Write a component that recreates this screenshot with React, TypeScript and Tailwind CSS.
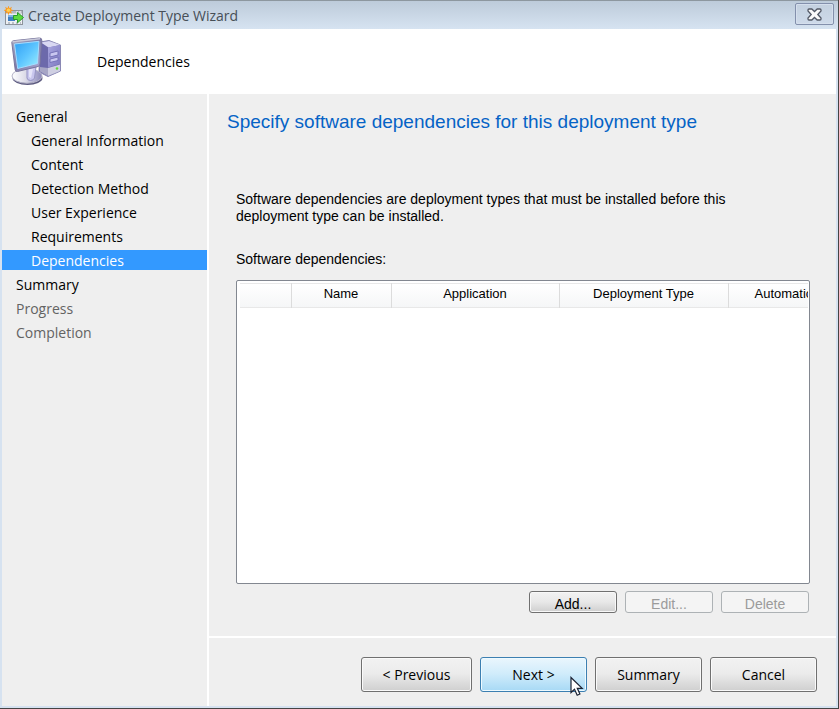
import React from "react";

const steps = [
  { name: "General", style: "pl-3.5 text-black" },
  { name: "General Information", style: "pl-[29px] text-black" },
  { name: "Content", style: "pl-[29px] text-black" },
  { name: "Detection Method", style: "pl-[29px] text-black" },
  { name: "User Experience", style: "pl-[29px] text-black" },
  { name: "Requirements", style: "pl-[29px] text-black" },
  { name: "Dependencies", style: "pl-[29px] bg-[#3399ff] text-white" },
  { name: "Summary", style: "pl-3.5 text-black" },
  { name: "Progress", style: "pl-3.5 text-[#636363]" },
  { name: "Completion", style: "pl-3.5 text-[#636363]" },
];

const bigButton =
  "h-[35px] rounded-[3px] border border-[#707070] bg-linear-to-b from-[#f2f2f2] from-0% via-[#ebebeb] via-48% to-[#cfcfcf] shadow-[inset_0_0_0_1px_#fafafa]";
const smallButton =
  "flex h-[22px] w-[88px] items-center justify-center rounded-[3px] border pt-1 font-['Liberation_Sans',Arial,sans-serif] text-sm leading-4";

const WizardIcon = () => (
  <svg width="20" height="20" viewBox="0 0 20 20" aria-hidden="true">
    <rect x="1.500" y="4.500" width="17" height="14" fill="#eceff3" stroke="#8d939b" />
    <path d="M2 5h16v2.500H2z" fill="#b4b9c0" />
    <path d="M12 6h2M15 6h2" stroke="#fff" />
    <path d="M4 9h7v6H4z" fill="#3f7fc4" />
    <path d="M4 9h7v2H4z" fill="#7fb2e4" />
    <path d="M4 17h2M8 17h2M12 17h2M16 17h1" stroke="#8d939b" />
    <path
      d="M9.500 9.500h4V6.500l6 5-6 5.300v-3.300h-4z"
      fill="#5edb40"
      stroke="#2a9a2c"
      strokeLinejoin="round"
    />
    <path
      d="M4.500-.5l.9 2.700L8 .8 6.900 3.300 9.700 4.200 6.900 5.200 8 7.700 5.400 6.500 4.500 9.300 3.500 6.500 1 7.700 2.100 5.200-.7 4.200 2.100 3.300 1 .8 3.500 2.200z"
      fill="#fb9a20"
    />
    <circle cx="4.500" cy="4.200" r="1.800" fill="#ffcf52" />
  </svg>
);

const ComputerIcon = () => (
  <svg width="52" height="51" viewBox="0 0 52 51" aria-hidden="true">
    <defs>
      <linearGradient id="screen" x1="0" y1="0" x2="1" y2="1">
        <stop offset="0" stopColor="#2f9ff3" />
        <stop offset="0.5" stopColor="#5cc4ff" />
        <stop offset="1" stopColor="#9df0ff" />
      </linearGradient>
      <linearGradient id="tower" x1="0" y1="0" x2="1" y2="1">
        <stop offset="0" stopColor="#a9a6e0" />
        <stop offset="1" stopColor="#7d79c0" />
      </linearGradient>
      <linearGradient id="base" x1="0" y1="0" x2="1" y2="0">
        <stop offset="0" stopColor="#ffffff" />
        <stop offset="0.45" stopColor="#dcdbe8" />
        <stop offset="1" stopColor="#8a87ba" />
      </linearGradient>
      <linearGradient id="frame" x1="0" y1="0" x2="1" y2="1">
        <stop offset="0" stopColor="#aeb0c6" />
        <stop offset="0.5" stopColor="#7d7aa8" />
        <stop offset="1" stopColor="#b3b1dc" />
      </linearGradient>
    </defs>
    {/* Tower */}
    <path d="M29 6l9-1.500 11.500 4.500v26L37 40.500 28 36z" fill="#6c69ab" stroke="#8a88b4" />
    <path d="M30 6.500l8-1.500 11.500 4-12 2.500z" fill="#d9d8f2" />
    <path d="M37 11.500L49 9v19l-12 3.500z" fill="url(#tower)" />
    <path d="M39 17l8-2v4l-8 2zM39 23l8-2v3.500l-8 2z" fill="#c9c7f0" stroke="#7572b8" />
    <path d="M37 32l12-3.500V35l-12 5z" fill="#cfcfe2" />
    <path d="M29 31l8 1v8l-8-4.500z" fill="#a7a6c6" />
    <circle cx="46" cy="32.500" r="1.300" fill="#62dc3c" />
    {/* Stand */}
    <ellipse cx="16.500" cy="42" rx="15" ry="7" fill="#5d5b80" />
    <ellipse cx="16" cy="40" rx="15" ry="7.200" fill="url(#base)" stroke="#b5b4c8" />
    <path d="M16 31h9l-1.500 11q-1 2.500-4 2.500t-3.500-2.500z" fill="#c8c6ed" stroke="#9694c4" />
    <path d="M18 33h4l-2 9-2-1z" fill="#e4e3f8" />
    {/* Monitor */}
    <path
      d="M.8 6.500Q.8 5 2.500 4.700L28 2q2.800-.2 2.800 2L29 28q-.2 2-2 2.500L6.500 35.500q-2 .3-2.300-1.700z"
      fill="url(#frame)"
      stroke="#77749c"
    />
    <path d="M1.500 5.700L29 2.700" stroke="#c9cad9" strokeWidth="1.500" />
    <path d="M3.500 8L28 5.300 26.500 27.500 6.700 32.500z" fill="url(#screen)" stroke="#a5dcff" />
  </svg>
);

const App = () => {
  return (
    <div className="flex min-h-screen flex-col border-r border-b border-[#454545] bg-[#d6e2f0] font-['Open_Sans','Noto_Sans',sans-serif] text-sm text-black">
      {/* Title bar */}
      <header className="flex h-[29px] items-center justify-between border-t border-[#8d979f] bg-linear-to-b from-[#bdcbda] to-[#d6e3f1] pt-0.5 pr-1 pl-1">
        <div className="flex items-center gap-1">
          <WizardIcon />
          <h1 className="leading-5 text-[#474f57]">Create Deployment Type Wizard</h1>
        </div>
        <button
          aria-label="Close"
          className="mb-1 flex h-[22px] w-[39px] items-center justify-center rounded-[2px] border border-[#8390ac] bg-linear-to-b from-[#c3d0df] to-[#cedaea] shadow-[inset_0_0_0_1px_#d5dfed]"
        >
          <svg width="15" height="13" viewBox="0 0 15 13" aria-hidden="true">
            <path
              d="M1 2Q1 1 2 1h2.800L7.500 3.500 10.200 1H13q1 0 1 1v1L10.800 6.500 14 10v1q0 1-1 1h-2.800L7.500 9.500 4.800 12H2q-1 0-1-1v-1L4.200 6.500 1 3z"
              fill="#fafafa"
              stroke="#535966"
              strokeWidth="1.300"
            />
          </svg>
        </button>
      </header>

      <main className="mr-0.5 mb-0.5 ml-0.5 flex flex-1 flex-col bg-[#efefef]">
        {/* Page banner */}
        <div className="flex h-[65px] items-center gap-[34px] bg-white pl-[9px]">
          <ComputerIcon />
          <h2>Dependencies</h2>
        </div>

        <div className="flex flex-1">
          {/* Steps */}
          <nav className="w-[207px] shrink-0 border-r-2 border-white pt-3">
            <ul className="flex flex-col gap-1">
              {steps.map((step) => (
                <li key={step.name}>
                  <a href="#" className={`block h-5 leading-[22px] ${step.style}`}>
                    {step.name}
                  </a>
                </li>
              ))}
            </ul>
          </nav>

          <div className="flex min-w-0 flex-1 flex-col">
            <section className="flex flex-1 flex-col pr-[26px] pb-[23px] pl-[27px] font-['Liberation_Sans',Arial,sans-serif]">
              <h3 className="-ml-[9px] pt-4 text-[19px] leading-6 text-[#0563c6]">
                Specify software dependencies for this deployment type
              </h3>
              <p className="mt-[57px] max-w-[520px] leading-[17px]">
                Software dependencies are deployment types that must be installed before this
                deployment type can be installed.
              </p>
              <p id="dependencies-label" className="mt-[26px] leading-[17px]">
                Software dependencies:
              </p>

              {/* Dependency list */}
              <div className="mt-3 flex-1 rounded-[2px] border border-[#828790] bg-white pt-0.5 pr-px pl-[3px]">
                <div className="overflow-hidden">
                  <table
                    aria-labelledby="dependencies-label"
                    className="w-full table-fixed border-collapse text-[13px]"
                  >
                    <thead className="bg-linear-to-b from-white to-[#f5f6f7]">
                      <tr className="h-6 border-y border-[#e8e8e8] leading-4 *:pb-1 *:font-normal">
                        <th className="w-[51px] border-r border-[#dcdcdc]"></th>
                        <th className="w-[100px] border-r border-[#dcdcdc]">Name</th>
                        <th className="w-[168px] border-r border-[#dcdcdc]">Application</th>
                        <th className="w-[169px] border-r border-[#dcdcdc]">Deployment Type</th>
                        <th className="pl-[26px] text-left">Automatic</th>
                      </tr>
                    </thead>
                    <tbody></tbody>
                  </table>
                </div>
              </div>

              <div className="mt-[7px] mr-px flex justify-end gap-2">
                <button
                  className={`${smallButton} border-[#707070] bg-linear-to-b from-[#f2f2f2] via-[#e8e8e8] to-[#cfcfcf] shadow-[inset_0_0_0_1px_#f8f8f8]`}
                >
                  Add...
                </button>
                <button disabled className={`${smallButton} border-[#adb2b5] bg-[#f4f4f4] text-[#9b9b9b]`}>
                  Edit...
                </button>
                <button disabled className={`${smallButton} border-[#adb2b5] bg-[#f4f4f4] text-[#9b9b9b]`}>
                  Delete
                </button>
              </div>
            </section>

            {/* Wizard buttons */}
            <footer className="flex justify-end gap-2 border-t-2 border-white pt-[19px] pr-[19px] pb-3.5">
              <button className={`${bigButton} w-[111px]`}>&lt; Previous</button>
              <div className="relative">
                <button className="h-[35px] w-[107px] rounded-[3px] border border-[#3c7fb1] bg-linear-to-b from-[#eaf6fd] from-0% via-[#d0ecfb] via-48% to-[#a7d9f5] shadow-[inset_0_0_0_1px_#eefaff]">
                  Next &gt;
                </button>
                <svg
                  width="14"
                  height="21"
                  viewBox="0 0 14 21"
                  aria-hidden="true"
                  className="pointer-events-none absolute top-[19px] left-[90px]"
                >
                  <path
                    d="M1 1.500v15l3.500-3.300 2.700 6 2.700-1.200-2.600-5.700h4.900z"
                    fill="#fff"
                    stroke="#1c2233"
                    strokeWidth="1.200"
                  />
                </svg>
              </div>
              <button className={`${bigButton} w-[107px]`}>Summary</button>
              <button className={`${bigButton} w-[107px]`}>Cancel</button>
            </footer>
          </div>
        </div>
      </main>
    </div>
  );
};

export default App;
